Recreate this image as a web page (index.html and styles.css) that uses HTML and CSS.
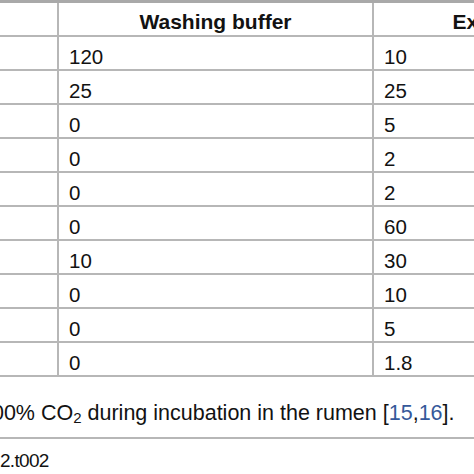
FILE: index.html
```html
<!DOCTYPE html>
<html>
<head>
<meta charset="utf-8">
<link rel="stylesheet" href="styles.css">
</head>
<body>
<div class="page">
  <table class="data">
    <colgroup>
      <col class="c1">
      <col class="c2">
      <col class="c3">
    </colgroup>
    <thead>
      <tr><th></th><th>Washing buffer</th><th>Extraction buffer</th></tr>
    </thead>
    <tbody>
      <tr><td></td><td>120</td><td>10</td></tr>
      <tr><td></td><td>25</td><td>25</td></tr>
      <tr><td></td><td>0</td><td>5</td></tr>
      <tr><td></td><td>0</td><td>2</td></tr>
      <tr><td></td><td>0</td><td>2</td></tr>
      <tr><td></td><td>0</td><td>60</td></tr>
      <tr><td></td><td>10</td><td>30</td></tr>
      <tr><td></td><td>0</td><td>10</td></tr>
      <tr><td></td><td>0</td><td>5</td></tr>
      <tr><td></td><td>0</td><td>1.8</td></tr>
    </tbody>
  </table>
  <p class="caption">100% CO<sub>2</sub> during incubation in the rumen [<a href="#r15">15</a>,<a href="#r16">16</a>].</p>
  <p class="doi">2.t002</p>
</div>
</body>
</html>
```
FILE: styles.css
```css
html, body {
  margin: 0;
  padding: 0;
  background: #ffffff;
}
.page {
  width: 474px;
  height: 474px;
  overflow: hidden;
  font-family: "Liberation Sans", Arial, sans-serif;
  color: #121212;
}
.data {
  border-collapse: collapse;
  table-layout: fixed;
  width: 700px;
  border-top: 3px solid #a9a9a9;
  border-bottom: 2px solid #b0b0b0;
}
.c1 { width: 58px; }
.c2 { width: 315px; }
.c3 { width: 327px; }
.data th,
.data td {
  border-right: 2px solid #b7b7b7;
  border-bottom: 2px solid #b7b7b7;
  vertical-align: top;
  box-sizing: border-box;
  white-space: nowrap;
}
.data th {
  height: 34px;
  padding: 7px 0 0 0;
  font-size: 21px;
  line-height: 24px;
  font-weight: bold;
  text-align: center;
}
.data td {
  height: 34px;
  padding: 8px 10px 0 10px;
  font-size: 20.5px;
  line-height: 24px;
  text-align: left;
}
.caption {
  margin: 0;
  padding: 24px 0 12px 0;
  font-size: 21.5px;
  line-height: 24px;
  white-space: nowrap;
  text-indent: -20px;
  border-bottom: 2px solid #b7b7b7;
}
.caption sub {
  font-size: 15px;
  line-height: 0;
  vertical-align: -3px;
}
.caption a {
  color: #35589a;
  text-decoration: none;
}
.doi {
  margin: 0;
  padding-top: 10px;
  font-size: 19px;
  line-height: 24px;
  letter-spacing: -0.7px;
}
```
